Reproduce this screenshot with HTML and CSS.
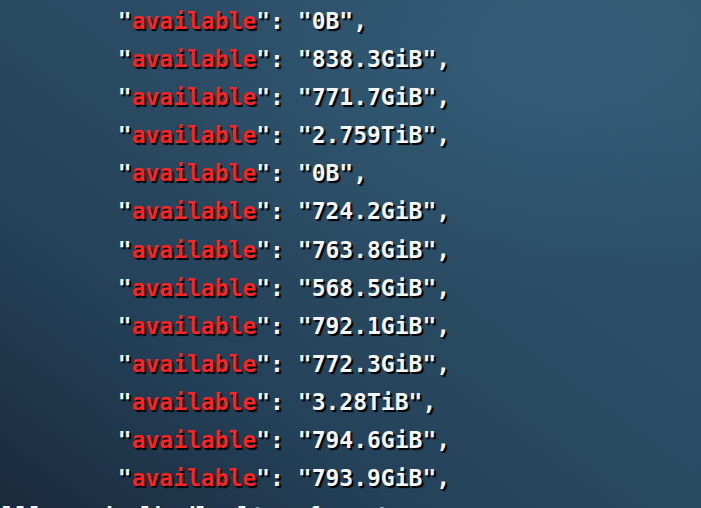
FILE: index.html
```html
<!DOCTYPE html>
<html lang="en">
<head>
  <meta charset="UTF-8" />
  <title>ceph osd df</title>
  <link rel="stylesheet" href="styles.css">
</head>
<body>

<!-- terminal output -->
<pre class="term">
        "<span class="key">available</span>": "0B",
        "<span class="key">available</span>": "838.3GiB",
        "<span class="key">available</span>": "771.7GiB",
        "<span class="key">available</span>": "2.759TiB",
        "<span class="key">available</span>": "0B",
        "<span class="key">available</span>": "724.2GiB",
        "<span class="key">available</span>": "763.8GiB",
        "<span class="key">available</span>": "568.5GiB",
        "<span class="key">available</span>": "792.1GiB",
        "<span class="key">available</span>": "772.3GiB",
        "<span class="key">available</span>": "3.28TiB",
        "<span class="key">available</span>": "794.6GiB",
        "<span class="key">available</span>": "793.9GiB",
</pre>
<pre class="term prompt">lll    d  lk dl  lt   f    t</pre>

</body>
</html>
```

FILE: styles.css
```css
* { margin: 0; padding: 0; box-sizing: border-box; }

html, body {
  height: 100%;
  overflow: hidden;
}

body {
  background:
    radial-gradient(ellipse 70% 60% at 78% 12%, rgba(52, 96, 122, 0.8) 0%, rgba(48, 88, 112, 0) 75%),
    linear-gradient(to top right, #1a2a3c 0%, #24425a 30%, #2a4a62 50%, #2c4f68 75%, #30576e 100%);
}

.term {
  padding: 2px 0 0 7px;
  font-family: 'DejaVu Sans Mono', monospace;
  font-size: 23px;
  font-weight: bold;
  line-height: 38.1px;
  color: #f4f6f8;
  text-shadow: 2px 2px 1px #000;
}

.prompt {
  padding-top: 0;
  padding-left: 2px;
  margin-top: 0;
}

.key {
  color: #ff2323;
}
```
